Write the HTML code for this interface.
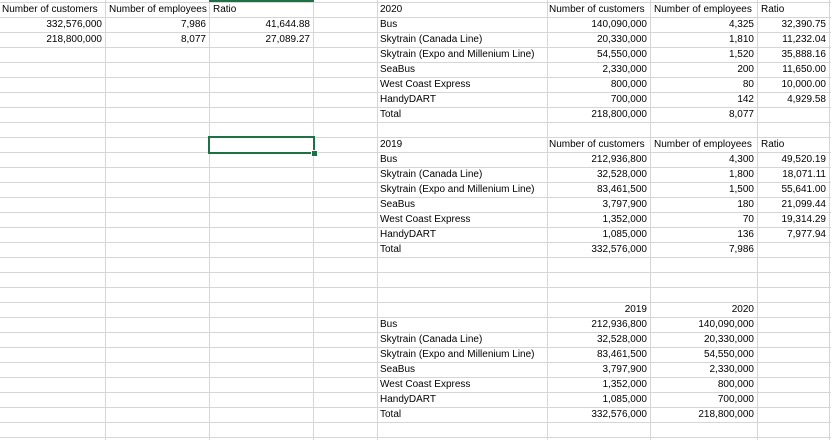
<!DOCTYPE html>
<html><head><meta charset="utf-8"><style>
body{margin:0;width:831px;height:440px;overflow:hidden;background:#fff;position:relative;font-family:"Liberation Sans",sans-serif;font-size:10px;color:#000}
.h{position:absolute;left:0;width:831px;height:1px;background:#d6d6d6}
.v{position:absolute;top:0;height:440px;width:1px;background:#d6d6d6}
.r{position:absolute;left:0;width:831px;height:15px}
.r div{position:absolute;top:0;height:15px;line-height:15px;white-space:nowrap}
.a{left:0;width:102px;text-align:right}
.b{left:106px;width:100px;text-align:right}
.c{left:210px;width:100px;text-align:right}
.e{left:380px}
.f{left:548px;width:99px;text-align:right}
.g{left:651px;width:103px;text-align:right}
.hh{left:758px;width:68px;text-align:right}
.L{text-align:left!important;padding-left:3px}
</style></head><body>
<div class="h" style="top:2px"></div><div class="h" style="top:17px"></div><div class="h" style="top:32px"></div><div class="h" style="top:47px"></div><div class="h" style="top:62px"></div><div class="h" style="top:77px"></div><div class="h" style="top:92px"></div><div class="h" style="top:107px"></div><div class="h" style="top:122px"></div><div class="h" style="top:137px"></div><div class="h" style="top:152px"></div><div class="h" style="top:167px"></div><div class="h" style="top:182px"></div><div class="h" style="top:197px"></div><div class="h" style="top:212px"></div><div class="h" style="top:227px"></div><div class="h" style="top:242px"></div><div class="h" style="top:257px"></div><div class="h" style="top:272px"></div><div class="h" style="top:287px"></div><div class="h" style="top:302px"></div><div class="h" style="top:317px"></div><div class="h" style="top:332px"></div><div class="h" style="top:347px"></div><div class="h" style="top:362px"></div><div class="h" style="top:377px"></div><div class="h" style="top:392px"></div><div class="h" style="top:407px"></div><div class="h" style="top:422px"></div><div class="h" style="top:437px"></div>
<div class="v" style="left:105px"></div><div class="v" style="left:209px"></div><div class="v" style="left:313px"></div><div class="v" style="left:377px"></div><div class="v" style="left:547px"></div><div class="v" style="left:650px"></div><div class="v" style="left:757px"></div><div class="v" style="left:829px"></div>
<div style="position:absolute;left:209px;top:0;width:105px;height:2px;background:#1e7145"></div>
<div style="position:absolute;left:208px;top:136px;width:103px;height:14px;border:2px solid #1e7145"></div>
<div style="position:absolute;left:311px;top:150px;width:5px;height:5px;background:#1e7145;border:1px solid #fff"></div>

<div class="r" style="top:2px"><div class="a L" style="padding-left:2px;text-align:left">Number of customers</div><div class="b L">Number of employees</div><div class="c L">Ratio</div><div class="e">2020</div><div class="f L" style="padding-left:1px">Number of customers</div><div class="g L">Number of employees</div><div class="hh L">Ratio</div></div>
<div class="r" style="top:17px"><div class="a">332,576,000</div><div class="b">7,986</div><div class="c">41,644.88</div><div class="e">Bus</div><div class="f">140,090,000</div><div class="g">4,325</div><div class="hh">32,390.75</div></div>
<div class="r" style="top:32px"><div class="a">218,800,000</div><div class="b">8,077</div><div class="c">27,089.27</div><div class="e">Skytrain (Canada Line)</div><div class="f">20,330,000</div><div class="g">1,810</div><div class="hh">11,232.04</div></div>
<div class="r" style="top:47px"><div class="e">Skytrain (Expo and Millenium Line)</div><div class="f">54,550,000</div><div class="g">1,520</div><div class="hh">35,888.16</div></div>
<div class="r" style="top:62px"><div class="e">SeaBus</div><div class="f">2,330,000</div><div class="g">200</div><div class="hh">11,650.00</div></div>
<div class="r" style="top:77px"><div class="e">West Coast Express</div><div class="f">800,000</div><div class="g">80</div><div class="hh">10,000.00</div></div>
<div class="r" style="top:92px"><div class="e">HandyDART</div><div class="f">700,000</div><div class="g">142</div><div class="hh">4,929.58</div></div>
<div class="r" style="top:107px"><div class="e">Total</div><div class="f">218,800,000</div><div class="g">8,077</div></div>

<div class="r" style="top:137px"><div class="e">2019</div><div class="f L" style="padding-left:1px">Number of customers</div><div class="g L">Number of employees</div><div class="hh L">Ratio</div></div>
<div class="r" style="top:152px"><div class="e">Bus</div><div class="f">212,936,800</div><div class="g">4,300</div><div class="hh">49,520.19</div></div>
<div class="r" style="top:167px"><div class="e">Skytrain (Canada Line)</div><div class="f">32,528,000</div><div class="g">1,800</div><div class="hh">18,071.11</div></div>
<div class="r" style="top:182px"><div class="e">Skytrain (Expo and Millenium Line)</div><div class="f">83,461,500</div><div class="g">1,500</div><div class="hh">55,641.00</div></div>
<div class="r" style="top:197px"><div class="e">SeaBus</div><div class="f">3,797,900</div><div class="g">180</div><div class="hh">21,099.44</div></div>
<div class="r" style="top:212px"><div class="e">West Coast Express</div><div class="f">1,352,000</div><div class="g">70</div><div class="hh">19,314.29</div></div>
<div class="r" style="top:227px"><div class="e">HandyDART</div><div class="f">1,085,000</div><div class="g">136</div><div class="hh">7,977.94</div></div>
<div class="r" style="top:242px"><div class="e">Total</div><div class="f">332,576,000</div><div class="g">7,986</div></div>

<div class="r" style="top:302px"><div class="f">2019</div><div class="g">2020</div></div>
<div class="r" style="top:317px"><div class="e">Bus</div><div class="f">212,936,800</div><div class="g">140,090,000</div></div>
<div class="r" style="top:332px"><div class="e">Skytrain (Canada Line)</div><div class="f">32,528,000</div><div class="g">20,330,000</div></div>
<div class="r" style="top:347px"><div class="e">Skytrain (Expo and Millenium Line)</div><div class="f">83,461,500</div><div class="g">54,550,000</div></div>
<div class="r" style="top:362px"><div class="e">SeaBus</div><div class="f">3,797,900</div><div class="g">2,330,000</div></div>
<div class="r" style="top:377px"><div class="e">West Coast Express</div><div class="f">1,352,000</div><div class="g">800,000</div></div>
<div class="r" style="top:392px"><div class="e">HandyDART</div><div class="f">1,085,000</div><div class="g">700,000</div></div>
<div class="r" style="top:407px"><div class="e">Total</div><div class="f">332,576,000</div><div class="g">218,800,000</div></div>
</body></html>
